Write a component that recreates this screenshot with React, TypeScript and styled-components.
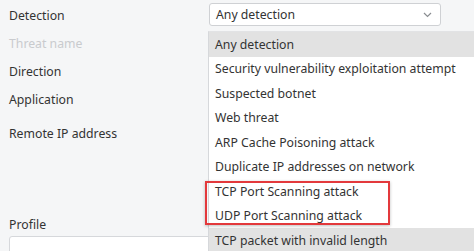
import React, { FC } from 'react';
import styled, { createGlobalStyle } from 'styled-components';

const GlobalStyle = createGlobalStyle`
  html, body {
    margin: 0;
    padding: 0;
    background: #f5f6f7;
    overflow: hidden;
  }
  body {
    font-family: 'Segoe UI', 'Noto Sans', sans-serif;
    font-size: 12.25px;
    color: #333;
  }
`;

const Page = styled.div`
  position: relative;
  width: 474px;
  height: 251px;
  overflow: hidden;
`;

const Form = styled.div`
  display: grid;
  grid-template-columns: 200px 232px;
  grid-template-rows: 28px 28px 28px 28px 100px 21px 24px;
  padding: 3px 0 0 9px;
`;

const Label = styled.div<{ $disabled?: boolean; $top?: boolean }>`
  display: flex;
  align-items: ${p => (p.$top ? 'flex-start' : 'center')};
  padding-top: ${p => (p.$top ? '13px' : '0')};
  margin-top: -3px;
  color: ${p => (p.$disabled ? '#c9cbce' : '#333')};
  grid-column: 1;
`;

const Select = styled.div`
  grid-column: 2;
  grid-row: 1;
  height: 23px;
  box-sizing: border-box;
  background: #fff;
  border: 1px solid #cfd1d4;
  border-radius: 3px;
  display: flex;
  align-items: center;
  justify-content: space-between;
  padding: 0 8px 0 6px;
`;

const ProfileInput = styled.div`
  grid-column: 1 / span 2;
  height: 24px;
  box-sizing: border-box;
  background: #fff;
  border: 1px solid #d6d8db;
  border-radius: 3px;
`;

const Menu = styled.div`
  position: absolute;
  top: 31px;
  left: 208px;
  width: 300px;
  background: #fff;
  border-left: 1px solid #d6d8db;
  border-top: 1px solid #e2e3e5;
`;

const Item = styled.div<{ $active?: boolean }>`
  height: 24.5px;
  display: flex;
  align-items: center;
  padding-left: 6px;
  background: ${p => (p.$active ? '#e2e2e2' : '#fff')};
  white-space: nowrap;
`;

const Marked = styled.div`
  position: relative;

  &::after {
    content: '';
    position: absolute;
    left: -4px;
    top: 2px;
    width: 185px;
    height: 44px;
    box-sizing: border-box;
    border: 2px solid #e3393c;
    box-shadow: 0 1px 3px rgba(0, 0, 0, 0.25);
  }
`;

const Chevron: FC = () => (
  <svg width="9" height="6" viewBox="0 0 9 6">
    <path d="M1 1 L4.5 4.5 L8 1" fill="none" stroke="#8a8d91" strokeWidth="1.2" />
  </svg>
);

const items = [
  'Any detection',
  'Security vulnerability exploitation attempt',
  'Suspected botnet',
  'Web threat',
  'ARP Cache Poisoning attack',
  'Duplicate IP addresses on network',
];

const App: FC = () => (
  <Page>
    <GlobalStyle />
    <Form>
      <Label>Detection</Label>
      <Select>
        <span>Any detection</span>
        <Chevron />
      </Select>
      <Label $disabled>Threat name</Label>
      <Label>Direction</Label>
      <Label>Application</Label>
      <Label $top>Remote IP address</Label>
      <Label>Profile</Label>
      <ProfileInput />
    </Form>
    <Menu>
      {items.map((t, i) => (
        <Item key={t} $active={i === 0}>{t}</Item>
      ))}
      <Marked>
        <Item>TCP Port Scanning attack</Item>
        <Item>UDP Port Scanning attack</Item>
      </Marked>
      <Item $active>TCP packet with invalid length</Item>
    </Menu>
  </Page>
);

export default App;
